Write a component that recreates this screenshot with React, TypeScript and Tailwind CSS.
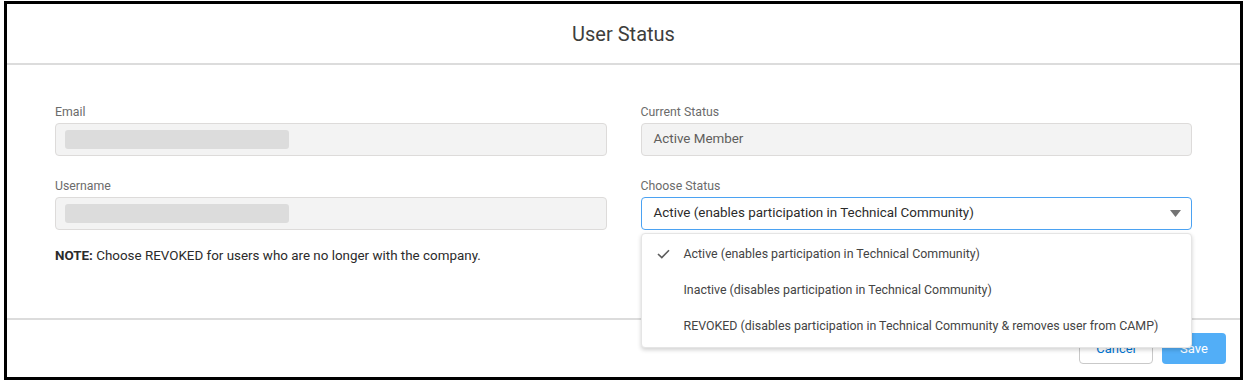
import React from 'react';

const options = [
  { label: 'Active (enables participation in Technical Community)', selected: true },
  { label: 'Inactive (disables participation in Technical Community)', selected: false },
  { label: 'REVOKED (disables participation in Technical Community & removes user from CAMP)', selected: false },
];

const Label: React.FC<{ text: string }> = ({ text }) => (
  <div className="text-[12.3px] leading-[18px] mb-[2px] text-[#6b6b6b]">{text}</div>
);

const App: React.FC = () => {
  return (
    <div className="w-[1246px] h-[382px] bg-white font-['Roboto',sans-serif] text-[#3e3e3c]">
      <div className="ml-[4px] mt-[1px] w-[1239px] h-[379px] border-[3px] border-black flex flex-col bg-white">
        {/* Header */}
        <div className="h-[61px] border-b-2 border-[#dcdcdc] flex items-center justify-center">
          <h2 className="text-[20px] text-[#3e3e3c]">User Status</h2>
        </div>

        {/* Body */}
        <div className="flex-1 px-12 pt-[38px]">
          <div className="grid grid-cols-2 gap-x-[34px]">
            <div>
              <Label text="Email" />
              <div className="h-[33px] rounded-[4px] border border-[#dddbda] bg-[#f3f3f3] flex items-center px-[9px]">
                <div className="w-[224px] h-[19px] rounded-[3px] bg-[#dcdcdc]" />
              </div>
              <div className="mt-[21px]">
                <Label text="Username" />
                <div className="h-[33px] rounded-[4px] border border-[#dddbda] bg-[#f3f3f3] flex items-center px-[9px]">
                  <div className="w-[224px] h-[19px] rounded-[3px] bg-[#dcdcdc]" />
                </div>
              </div>
              <p className="mt-[17px] text-[13.4px] leading-[18px] text-[#2b2b2b]">
                <span className="font-bold">NOTE:</span> Choose REVOKED for users who are no longer with the company.
              </p>
            </div>

            <div>
              <Label text="Current Status" />
              <div className="h-[33px] rounded-[4px] border border-[#dddbda] bg-[#f3f3f3] flex items-center px-[12px] text-[13.4px] text-[#605e5c]">
                Active Member
              </div>
              <div className="mt-[21px]">
                <Label text="Choose Status" />
                <div className="relative">
                  <div className="h-[33px] rounded-[4px] border border-[#4ba2f2] bg-white flex items-center justify-between pl-[12px] pr-[10px] text-[13.4px] text-[#2b2b2b]">
                    <span>Active (enables participation in Technical Community)</span>
                    <svg width="11" height="7" viewBox="0 0 11 7">
                      <polygon points="0,0 11,0 5.5,7" fill="#747474" />
                    </svg>
                  </div>

                  {/* Open dropdown */}
                  <div className="absolute left-0 right-0 top-full mt-[3px] z-10 bg-white border border-[#e5e5e5] rounded-[4px] shadow-[0_2px_4px_rgba(0,0,0,0.18)] pt-[2px] pb-[3px]">
                    {options.map((opt) => (
                      <div key={opt.label} className="h-[36px] flex items-center text-[12.4px] text-[#444444]">
                        <span className="w-[42px] flex justify-center pl-[2px]">
                          {opt.selected && (
                            <svg width="13" height="10" viewBox="0 0 13 10">
                              <path d="M1 5 L4.8 8.6 L12 1.2" fill="none" stroke="#5c5c5c" strokeWidth="1.6" />
                            </svg>
                          )}
                        </span>
                        <span>{opt.label}</span>
                      </div>
                    ))}
                  </div>
                </div>
              </div>
            </div>
          </div>
        </div>

        {/* Footer */}
        <div className="h-[59px] border-t-2 border-[#dcdcdc] flex items-center justify-end gap-[9px] pr-[14px]">
          <button className="h-[31px] w-[74px] rounded-[4px] border border-[#c9c9c9] bg-white text-[13px] text-[#0176d3]">
            Cancel
          </button>
          <button className="h-[31px] w-[64px] rounded-[4px] bg-[#52aef7] text-[13px] text-white">
            Save
          </button>
        </div>
      </div>
    </div>
  );
};

export default App;
